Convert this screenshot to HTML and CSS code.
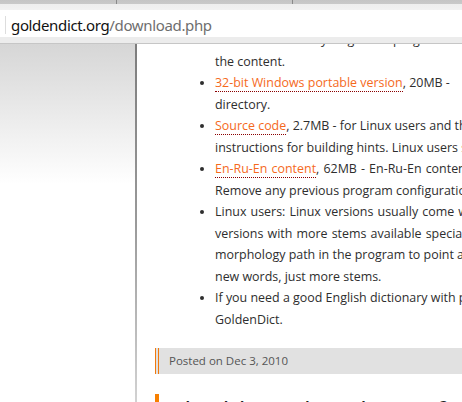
FILE: index.html
```html
<!DOCTYPE html>
<html>
<head>
<meta charset="utf-8">
<link rel="stylesheet" href="styles.css">
</head>
<body>
<div class="chrome">
  <div class="tabs">
    <div class="tab tab-first"></div>
    <div class="tab tab-second"></div>
    <div class="tab tab-rest"></div>
  </div>
  <div class="urlbar">
    <div class="url"><span class="host">goldendict.org</span><span class="path">/download.php</span></div>
  </div>
  <div class="urlbar-bottom"></div>
</div>
<div class="page">
  <div class="sidebar"></div>
  <div class="divider"></div>
  <div class="main">
    <ul class="downloads">
      <li>
        <span class="line j">recommended way to get the program and everything you need. Install it and then get</span>
        <span class="line">the content.</span>
      </li>
      <li>
        <span class="line"><a class="dl">32-bit Windows portable version</a>, 20MB -    unpack it into any directory and put the content into the content</span>
        <span class="line">directory.</span>
      </li>
      <li>
        <span class="line"><a class="dl">Source code</a>, 2.7MB - for Linux users and those who want to build it. See the README file for</span>
        <span class="line">instructions for building hints. Linux users should check their distribution packages first.</span>
      </li>
      <li>
        <span class="line j"><a class="dl">En-Ru-En content</a>, 62MB - En-Ru-En content for the program: dictionaries, morphology and sounds.</span>
        <span class="line">Remove any previous program configuration before installing this one.</span>
      </li>
      <li>
        <span class="line j">Linux users: Linux versions usually come without the content; there are morphology</span>
        <span class="line j">versions with more stems available specially for GoldenDict. Set the</span>
        <span class="line">morphology path in the program to point at them. There are no</span>
        <span class="line">new words, just more stems.</span>
      </li>
      <li>
        <span class="line">If you need a good English dictionary with pronunciation, try the one shipped with</span>
        <span class="line">GoldenDict.</span>
      </li>
    </ul>
    <div class="posted">Posted on Dec 3, 2010</div>
    <h2 class="post-title">Ebuilds and packages for Linux</h2>
  </div>
</div>
</body>
</html>
```
FILE: styles.css
```css
html, body {
  margin: 0;
  padding: 0;
}
body {
  width: 462px;
  height: 402px;
  overflow: hidden;
  background: #fff;
  font-family: "Open Sans", "Noto Sans", sans-serif;
}
.chrome {
  display: flex;
  flex-direction: column;
}
.tabs {
  display: flex;
  height: 10px;
  background: linear-gradient(#c5c5c5 0, #c9c9c9 4px, #eeeeee 4px, #f2f2f2 10px);
}
.tab {
  height: 4px;
  border-right: 1px solid #8a8a8a;
}
.tab-first { width: 116px; }
.tab-second { width: 175px; }
.tab-rest { flex: 1; border-right: none; }
.urlbar {
  height: 27px;
  background: #fff;
  display: flex;
  align-items: center;
  padding-left: 5px;
}
.url {
  border-left: 1px solid #dddddd;
  padding-left: 5px;
  height: 18px;
  line-height: 18px;
  font-family: "Noto Sans", "Open Sans", sans-serif;
  font-size: 15px;
  letter-spacing: -0.35px;
  margin-top: 2px;
}
.host { color: #111; }
.path { color: #6e6e6e; }
.urlbar-bottom {
  height: 6px;
  background: #ececec;
  border-bottom: 1px solid #c6c6c6;
}
.page {
  display: flex;
  height: 358px;
  overflow: hidden;
}
.sidebar {
  width: 135px;
  flex-shrink: 0;
  background: linear-gradient(#d6d6d6 0, #f6f6f6 110px, #ffffff 140px);
}
.divider {
  width: 2px;
  flex-shrink: 0;
  background: linear-gradient(#7d7d7d 0, #9a9a9a 180px, #d2d2d2 358px);
}
.main {
  width: 640px;
  flex-shrink: 0;
  padding-left: 18px;
  box-sizing: border-box;
}
.downloads {
  margin: -15px 0 0 0;
  padding: 0 0 0 60px;
  list-style: disc;
  color: #2e2e2e;
  font-size: 12.45px;
  line-height: 21.5px;
}
.line {
  display: block;
  white-space: pre;
}
.j { word-spacing: 0.9px; }
.dl {
  color: #f5691c;
  text-decoration: none;
  border-bottom: 1px dotted #8b0000;
}
.posted {
  margin-top: 18px;
  height: 26px;
  line-height: 26px;
  background: #e1e1e1;
  border-left: 4px double #f07a10;
  padding-left: 10px;
  color: #555;
  font-size: 11.5px;
}
.post-title {
  margin: 20px 0 0 0;
  border-left: 4px solid #f77f00;
  padding: 1px 0 0 11px;
  font-size: 26px;
  font-weight: normal;
  line-height: 31px;
  color: #222;
}
```
